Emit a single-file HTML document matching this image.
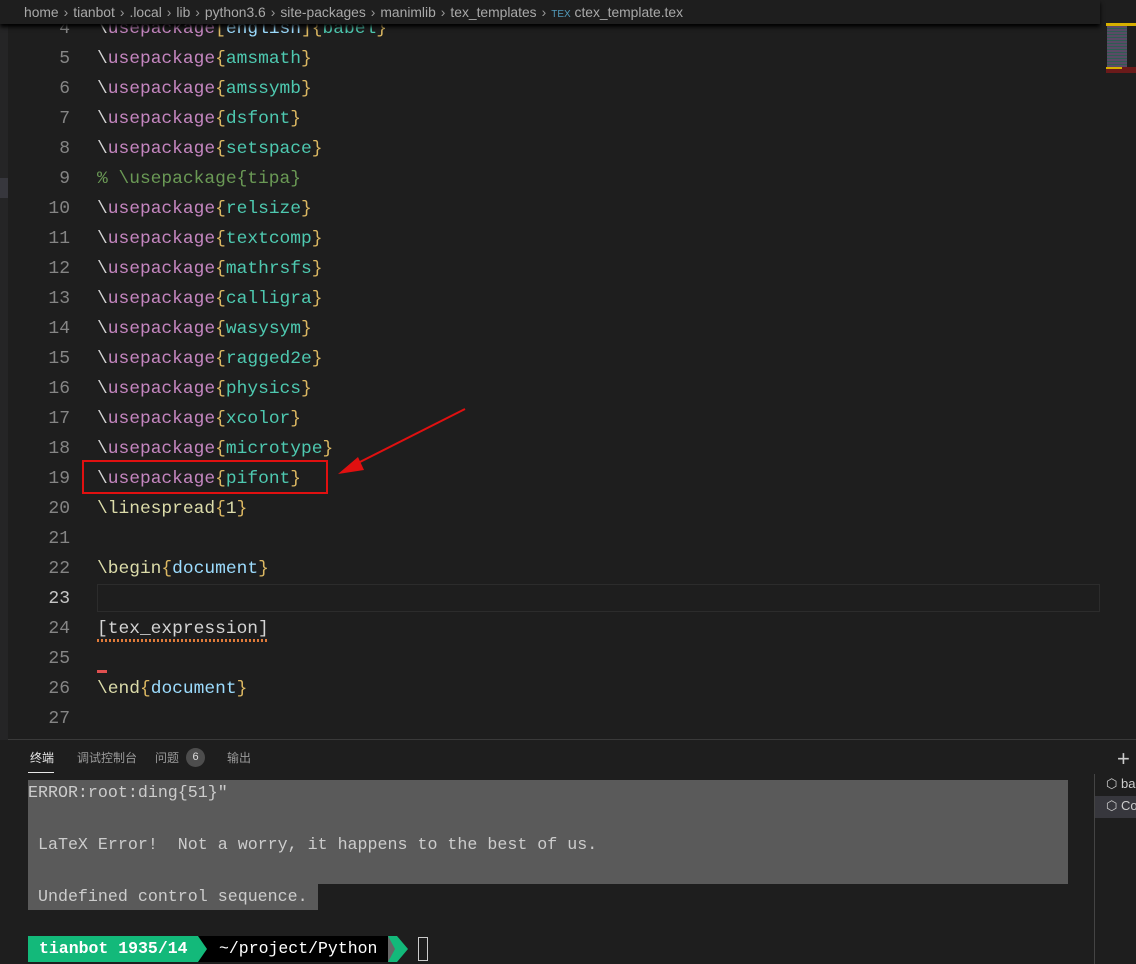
<!DOCTYPE html>
<html><head><meta charset="utf-8"><style>
body{margin:0;width:1136px;height:964px;background:#1e1e1e;overflow:hidden;position:relative;font-family:"Liberation Mono",monospace}
.bc{position:absolute;left:0;top:0;width:1100px;height:24px;background:#1e1e1e;box-shadow:0 3px 4px #000;z-index:3;font:13.85px "Liberation Sans","Noto Sans CJK SC",sans-serif;color:#a9a9a9;line-height:24px;padding-left:24px;box-sizing:border-box;white-space:nowrap}
.bc i{font-style:normal;margin:0 5px;color:#999}
.gut{position:absolute;left:0;top:0;width:8px;height:740px;background:#252526}
.ln{position:absolute;left:30px;width:40px;text-align:right;color:#858585;font-size:18px;line-height:30px}
.cl{position:absolute;left:97px;font-size:17.9px;line-height:30px;color:#d4d4d4;white-space:pre}
.k{color:#c586c0}.b{color:#dcb862}.p{color:#4ec9b0}.y{color:#dcdcaa}.d{color:#9cdcfe}.c{color:#6a9955}
.tabs{position:absolute;top:749px;font:12px "Liberation Sans","Noto Sans CJK SC",sans-serif;color:#9a9a9a}
.term{position:absolute;font-size:16.65px;color:#ccc;white-space:pre;line-height:26px}
.lines{position:absolute;left:0;top:1px;width:1100px;height:740px}
</style></head><body>
<div class="gut"></div>
<div style="position:absolute;left:0;top:178px;width:8px;height:20px;background:#37373d"></div>
<div class="bc">home<i>›</i>tianbot<i>›</i>.local<i>›</i>lib<i>›</i>python3.6<i>›</i>site-packages<i>›</i>manimlib<i>›</i>tex_templates<i>›</i><span style="color:#519aba;font-size:10px">TEX</span> ctex_template.tex</div>
<div style="position:absolute;left:1106px;top:23px;width:30px;height:3px;background:#d7b000"></div>
<div style="position:absolute;left:1107px;top:26px;width:20px;height:42px;background:repeating-linear-gradient(#5a4a66 0 2px,#2e5e52 2px 3px)"></div>
<div style="position:absolute;left:1106px;top:67px;width:30px;height:6px;background:#6b1a1a"></div>
<div style="position:absolute;left:1106px;top:67px;width:16px;height:2px;background:#d7b000"></div>

<div class="lines">
<div style="position:absolute;left:97px;top:583px;width:1003px;height:28px;border:1px solid #2c2c2c;box-sizing:border-box"></div>
<div class="ln" style="top:13px">4</div><div class="cl" style="top:13px">\<span class="k">usepackage</span><span class="b">[</span><span class="d">english</span><span class="b">]{</span><span class="p">babel</span><span class="b">}</span></div>
<div class="ln" style="top:43px">5</div><div class="cl" style="top:43px">\<span class="k">usepackage</span><span class="b">{</span><span class="p">amsmath</span><span class="b">}</span></div>
<div class="ln" style="top:73px">6</div><div class="cl" style="top:73px">\<span class="k">usepackage</span><span class="b">{</span><span class="p">amssymb</span><span class="b">}</span></div>
<div class="ln" style="top:103px">7</div><div class="cl" style="top:103px">\<span class="k">usepackage</span><span class="b">{</span><span class="p">dsfont</span><span class="b">}</span></div>
<div class="ln" style="top:133px">8</div><div class="cl" style="top:133px">\<span class="k">usepackage</span><span class="b">{</span><span class="p">setspace</span><span class="b">}</span></div>
<div class="ln" style="top:163px">9</div><div class="cl c" style="top:163px">% \usepackage{tipa}</div>
<div class="ln" style="top:193px">10</div><div class="cl" style="top:193px">\<span class="k">usepackage</span><span class="b">{</span><span class="p">relsize</span><span class="b">}</span></div>
<div class="ln" style="top:223px">11</div><div class="cl" style="top:223px">\<span class="k">usepackage</span><span class="b">{</span><span class="p">textcomp</span><span class="b">}</span></div>
<div class="ln" style="top:253px">12</div><div class="cl" style="top:253px">\<span class="k">usepackage</span><span class="b">{</span><span class="p">mathrsfs</span><span class="b">}</span></div>
<div class="ln" style="top:283px">13</div><div class="cl" style="top:283px">\<span class="k">usepackage</span><span class="b">{</span><span class="p">calligra</span><span class="b">}</span></div>
<div class="ln" style="top:313px">14</div><div class="cl" style="top:313px">\<span class="k">usepackage</span><span class="b">{</span><span class="p">wasysym</span><span class="b">}</span></div>
<div class="ln" style="top:343px">15</div><div class="cl" style="top:343px">\<span class="k">usepackage</span><span class="b">{</span><span class="p">ragged2e</span><span class="b">}</span></div>
<div class="ln" style="top:373px">16</div><div class="cl" style="top:373px">\<span class="k">usepackage</span><span class="b">{</span><span class="p">physics</span><span class="b">}</span></div>
<div class="ln" style="top:403px">17</div><div class="cl" style="top:403px">\<span class="k">usepackage</span><span class="b">{</span><span class="p">xcolor</span><span class="b">}</span></div>
<div class="ln" style="top:433px">18</div><div class="cl" style="top:433px">\<span class="k">usepackage</span><span class="b">{</span><span class="p">microtype</span><span class="b">}</span></div>
<div class="ln" style="top:463px">19</div><div class="cl" style="top:463px">\<span class="k">usepackage</span><span class="b">{</span><span class="p">pifont</span><span class="b">}</span></div>
<div class="ln" style="top:493px">20</div><div class="cl" style="top:493px"><span class="y">\linespread</span><span class="b">{</span><span class="y">1</span><span class="b">}</span></div>
<div class="ln" style="top:523px">21</div>
<div class="ln" style="top:553px">22</div><div class="cl" style="top:553px"><span class="y">\begin</span><span class="b">{</span><span class="d">document</span><span class="b">}</span></div>
<div class="ln" style="top:583px;color:#c6c6c6">23</div>
<div class="ln" style="top:613px">24</div><div class="cl" style="top:613px">[tex_expression]</div>
<div style="position:absolute;left:97px;top:638px;width:172px;height:3px;background:repeating-linear-gradient(90deg,#e07a3a 0 2px,transparent 2px 4px)"></div>
<div class="ln" style="top:643px">25</div>
<div style="position:absolute;left:97px;top:669px;width:10px;height:3px;background:#e05050"></div>
<div class="ln" style="top:673px">26</div><div class="cl" style="top:673px"><span class="y">\end</span><span class="b">{</span><span class="d">document</span><span class="b">}</span></div>
<div class="ln" style="top:703px">27</div>
</div>

<div style="position:absolute;left:82px;top:460px;width:246px;height:34px;border:2px solid #e01010;box-sizing:border-box"></div>
<svg style="position:absolute;left:0;top:0" width="1136" height="964"><line x1="465" y1="409" x2="352" y2="466" stroke="#e01010" stroke-width="2"/><polygon points="338,474 358,457 364,470" fill="#e01010"/></svg>

<div style="position:absolute;left:8px;top:739px;width:1128px;height:1px;background:#3a3a3a"></div>
<div class="tabs" style="left:30px;color:#e7e7e7">终端</div>
<div style="position:absolute;left:28px;top:772px;width:26px;height:1px;background:#e7e7e7"></div>
<div class="tabs" style="left:77px">调试控制台</div>
<div class="tabs" style="left:155px">问题</div>
<div style="position:absolute;left:186px;top:748px;width:19px;height:19px;border-radius:10px;background:#4d4d4d;color:#ddd;font:11px 'Liberation Sans';text-align:center;line-height:19px">6</div>
<div class="tabs" style="left:227px">输出</div>
<div style="position:absolute;left:1117px;top:746px;color:#ccc;font:22px 'Liberation Sans'">+</div>
<div style="position:absolute;left:1094px;top:774px;width:1px;height:190px;background:#444"></div>
<div style="position:absolute;left:1095px;top:796px;width:41px;height:22px;background:#37373d"></div>
<div style="position:absolute;left:1106px;top:776px;color:#ccc;font:13px 'Liberation Sans';white-space:nowrap">⬡ ba</div>
<div style="position:absolute;left:1106px;top:798px;color:#ccc;font:13px 'Liberation Sans';white-space:nowrap">⬡ Co</div>

<div style="position:absolute;left:28px;top:780px;width:1040px;height:104px;background:#5a5a5a"></div>
<div style="position:absolute;left:28px;top:884px;width:290px;height:26px;background:#5a5a5a"></div>
<div class="term" style="left:28px;top:780px">ERROR:root:ding{51}"</div>
<div class="term" style="left:28px;top:832px"> LaTeX Error!  Not a worry, it happens to the best of us.</div>
<div class="term" style="left:28px;top:884px"> Undefined control sequence.</div>
<div style="position:absolute;left:28px;top:936px;width:170px;height:26px;background:#13b97a"></div>
<div class="term" style="left:39px;top:936px;color:#fff;font-weight:bold;font-size:16.5px">tianbot 1935/14</div>
<div style="position:absolute;left:198px;top:936px;width:190px;height:26px;background:#000"></div>
<svg style="position:absolute;left:198px;top:936px" width="14" height="26"><polygon points="0,0 0,26 9,13" fill="#13b97a"/></svg>
<div class="term" style="left:219px;top:936px;color:#fff;font-size:16.5px">~/project/Python</div>
<div style="position:absolute;left:388px;top:936px;width:8px;height:26px;background:#666"></div>
<svg style="position:absolute;left:388px;top:936px" width="24" height="26"><polygon points="0,0 9,0 20,13 9,26 0,26 7,13" fill="#13b97a"/></svg>
<div style="position:absolute;left:418px;top:937px;width:10px;height:24px;border:1px solid #ccc;box-sizing:border-box"></div>
</body></html>
